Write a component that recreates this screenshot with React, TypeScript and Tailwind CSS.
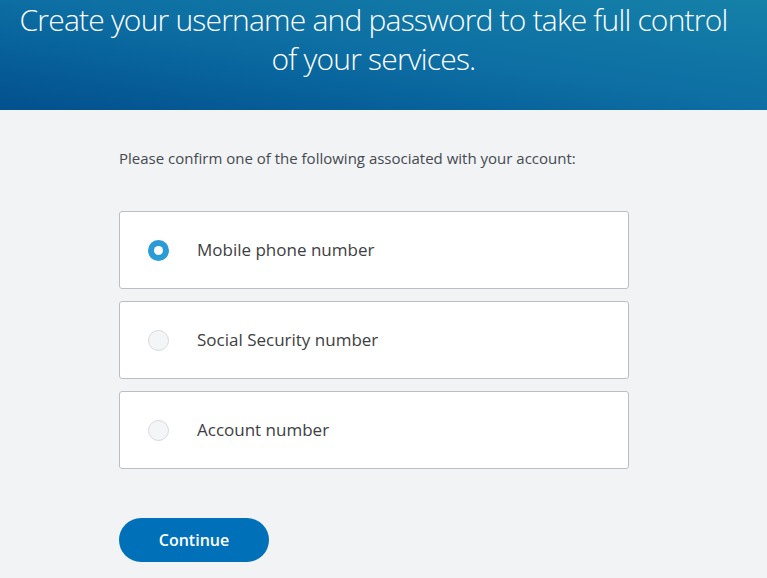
import React, { useState } from 'react';

const options = ['Mobile phone number', 'Social Security number', 'Account number'];

const App: React.FC = () => {
  const [selected, setSelected] = useState(0);

  return (
    <div className="min-h-[578px] bg-[#f2f3f5]" style={{ fontFamily: '"Open Sans", "Noto Sans", sans-serif' }}>
      <div className="h-[110px] bg-gradient-to-tr from-[#03508f] via-[#0d6ea3] to-[#1580a8] pl-[4px] pr-[24px] pt-0 text-center">
        <h1 className="mx-auto text-[30px] font-light leading-[39px] tracking-[-0.8px] text-white">
          Create your username and password to take full control
          <br />
          of your services.
        </h1>
      </div>

      <div className="px-[119px] pb-4 pt-[37px]">
        <p className="text-[15px] leading-[22px] text-[#444a50]">
          Please confirm one of the following associated with your account:
        </p>

        <div className="mt-[42px] flex w-[510px] flex-col gap-[12px]">
          {options.map((label, index) => (
            <button
              key={label}
              type="button"
              onClick={() => setSelected(index)}
              className="flex h-[78px] items-center rounded-[3px] border border-[#b9bfc5] bg-white pl-[28px] text-left"
            >
              {selected === index ? (
                <span className="flex h-[21px] w-[21px] items-center justify-center rounded-full bg-[#2b9bd8]">
                  <span className="h-[9px] w-[9px] rounded-full bg-white" />
                </span>
              ) : (
                <span className="h-[21px] w-[21px] rounded-full border border-[#d6d9dc] bg-[#f4f5f6]" />
              )}
              <span className="ml-[28px] text-[17px] text-[#3d4043]">{label}</span>
            </button>
          ))}
        </div>

        <button
          type="button"
          className="mt-[49px] h-[44px] w-[150px] rounded-full bg-[#0071b9] text-[16px] font-semibold text-white"
        >
          Continue
        </button>
      </div>
    </div>
  );
};

export default App;
